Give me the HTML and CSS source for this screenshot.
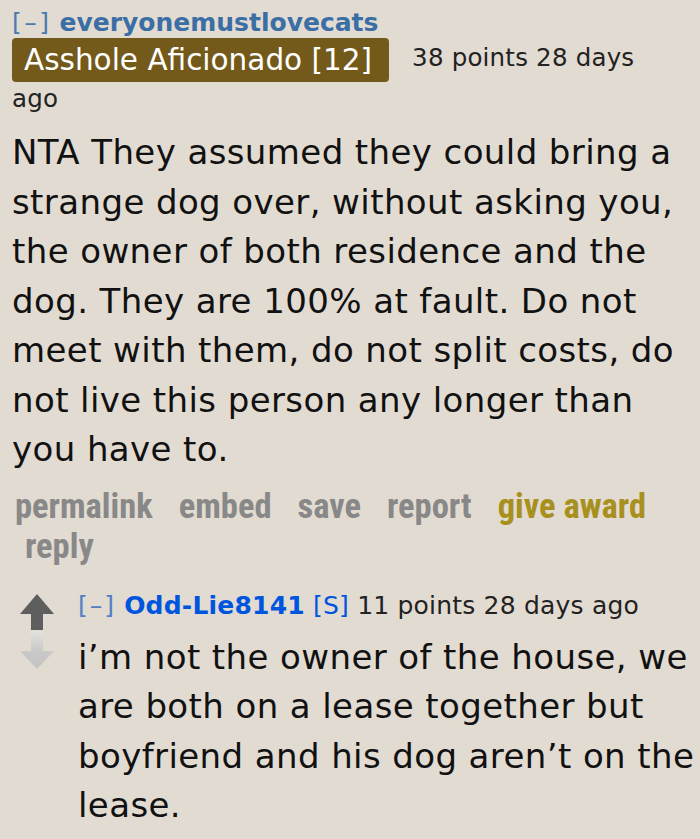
FILE: index.html
```html
<!DOCTYPE html>
<html>
<head>
<meta charset="utf-8">
<link rel="stylesheet" href="styles.css">
</head>
<body>
<div class="page">
  <div class="comment">
    <div class="tagline">
      <div class="author-line"><span class="expand">[–]</span> <span class="author">everyonemustlovecats</span></div>
      <div class="flair-line">
        <span class="flair">Asshole Aficionado [12]</span>
        <span class="meta">38 points 28 days</span>
      </div>
      <div class="meta ago">ago</div>
    </div>
    <div class="body">NTA They assumed they could bring a strange dog over, without asking you, the owner of both residence and the dog. They are 100% at fault. Do not meet with them, do not split costs, do not live this person any longer than you have to.</div>
    <ul class="buttons">
      <li>permalink</li>
      <li>embed</li>
      <li>save</li>
      <li>report</li>
      <li class="award">give award</li>
      <li class="reply">reply</li>
    </ul>
    <div class="child">
      <div class="votes">
        <svg class="arrow up" width="34" height="36" viewBox="0 0 34 36"><path d="M17 0 L34 20 L23 20 L23 36 L11 36 L11 20 L0 20 Z"/></svg>
        <svg class="arrow down" width="34" height="38" viewBox="0 0 34 38">
          <defs><linearGradient id="dg" x1="0" y1="0" x2="0" y2="1"><stop offset="0" stop-color="#e4e2df"/><stop offset="0.5" stop-color="#c9c9c9"/><stop offset="1" stop-color="#c4c4c4"/></linearGradient></defs>
          <path fill="url(#dg)" d="M11 0 L23 0 L23 20 L34 20 L17 38 L0 20 L11 20 Z"/>
        </svg>
      </div>
      <div class="child-main">
        <div class="child-tagline"><span class="expand2">[–]</span> <span class="author2">Odd-Lie8141</span> <span class="submitter">[S]</span> <span class="meta2">11 points 28 days ago</span></div>
        <div class="body child-body">i’m not the owner of the house, we are both on a lease together but boyfriend and his dog aren’t on the lease.</div>
      </div>
    </div>
  </div>
</div>
</body>
</html>
```
FILE: styles.css
```css
html, body {
  margin: 0;
  padding: 0;
  background: #e2dbd1;
}
.page {
  width: 700px;
  height: 839px;
  background: #e2dbd1;
  font-family: "DejaVu Sans", Verdana, sans-serif;
  color: #222;
  overflow: hidden;
}
.comment {
  padding: 8px 0 0 12px;
}
.author-line {
  font-size: 25px;
  line-height: 30px;
}
.expand {
  color: #4a7ab0;
  font-weight: normal;
  letter-spacing: 2.5px;
}
.author {
  color: #3a6ea5;
  font-weight: bold;
}
.flair-line {
  display: flex;
  align-items: flex-start;
  gap: 23px;
}
.flair {
  background: #735a1a;
  color: #fff;
  font-size: 29.5px;
  line-height: 44px;
  padding: 0 17px 0 12px;
  border-radius: 4px;
}
.meta {
  font-size: 24.5px;
  line-height: 30px;
  color: #222;
  letter-spacing: 0.2px;
}
.flair-line .meta {
  padding-top: 5px;
}
.ago {
  line-height: 34px;
}
.body {
  font-size: 34px;
  line-height: 49.5px;
  letter-spacing: 0.4px;
  color: #111;
  margin-top: 12px;
}
.buttons {
  list-style: none;
  margin: 11px 0 0 3px;
  padding: 0;
  display: flex;
  flex-wrap: wrap;
  font-family: "Liberation Sans Narrow", "Roboto Condensed", "DejaVu Sans Condensed", sans-serif;
  font-stretch: condensed;
  font-weight: bold;
  font-size: 34.5px;
  line-height: 40px;
  color: #888;
  column-gap: 26px;
  width: 660px;
}
.buttons .award {
  color: #a8901f;
}
.buttons .reply {
  padding-left: 10px;
}
.child {
  display: flex;
  margin-top: 24px;
  gap: 16px;
}
.votes {
  width: 50px;
  display: flex;
  flex-direction: column;
  align-items: center;
  padding-top: 4px;
  gap: 1px;
}
.arrow.up { fill: #5e5e5e; }
.child-main {
  flex: 1;
}
.child-tagline {
  font-size: 25px;
  line-height: 32px;
  letter-spacing: 0.2px;
}
.expand2 {
  color: #4f80c4;
  letter-spacing: 2px;
}
.author2 {
  color: #0055df;
  font-weight: bold;
}
.submitter {
  color: #0055df;
}
.meta2 {
  color: #222;
}
.child-body {
  margin-top: 11px;
}
```
